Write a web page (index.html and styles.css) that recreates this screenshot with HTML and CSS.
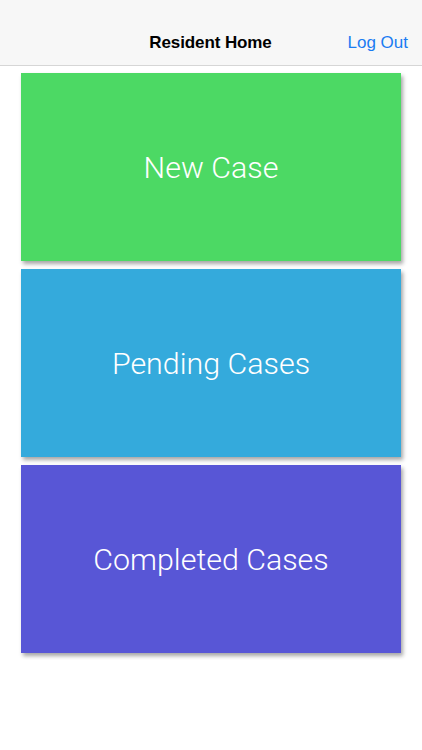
FILE: index.html
```html
<!DOCTYPE html>
<html>
<head>
<meta charset="utf-8">
<link rel="stylesheet" href="styles.css">
</head>
<body>
<header class="navbar">
  <div class="nav-row">
    <span class="nav-side"></span>
    <span class="nav-title">Resident Home</span>
    <span class="nav-side nav-action">Log Out</span>
  </div>
</header>
<main class="menu">
  <div class="card card-new">New Case</div>
  <div class="card card-pending">Pending Cases</div>
  <div class="card card-completed">Completed Cases</div>
</main>
</body>
</html>
```
FILE: styles.css
```css
html, body {
  margin: 0;
  padding: 0;
  background: #ffffff;
  font-family: "Liberation Sans", Arial, sans-serif;
}
.navbar {
  background: #f7f7f7;
  border-bottom: 1px solid #d6d6d6;
  padding-top: 21px;
}
.nav-row {
  height: 44px;
  display: grid;
  grid-template-columns: 1fr auto 1fr;
  align-items: center;
  padding: 0 14px 0 13px;
}
.nav-title {
  font-size: 17px;
  font-weight: 700;
  color: #000;
  letter-spacing: -0.1px;
}
.nav-action {
  justify-self: end;
  color: #1a7cf2;
  font-size: 17px;
}
.menu {
  display: flex;
  flex-direction: column;
  gap: 8px;
  padding: 7px 21px;
}
.card {
  height: 188px;
  display: flex;
  align-items: center;
  justify-content: center;
  color: #ffffff;
  font-family: Roboto, "Liberation Sans", sans-serif;
  font-weight: 300;
  font-size: 30.4px;
  box-shadow: 2px 3px 4px rgba(0, 0, 0, 0.35);
}
.card-new { background: #4cd964; }
.card-pending { background: #34aadc; }
.card-completed { background: #5856d6; }
```
